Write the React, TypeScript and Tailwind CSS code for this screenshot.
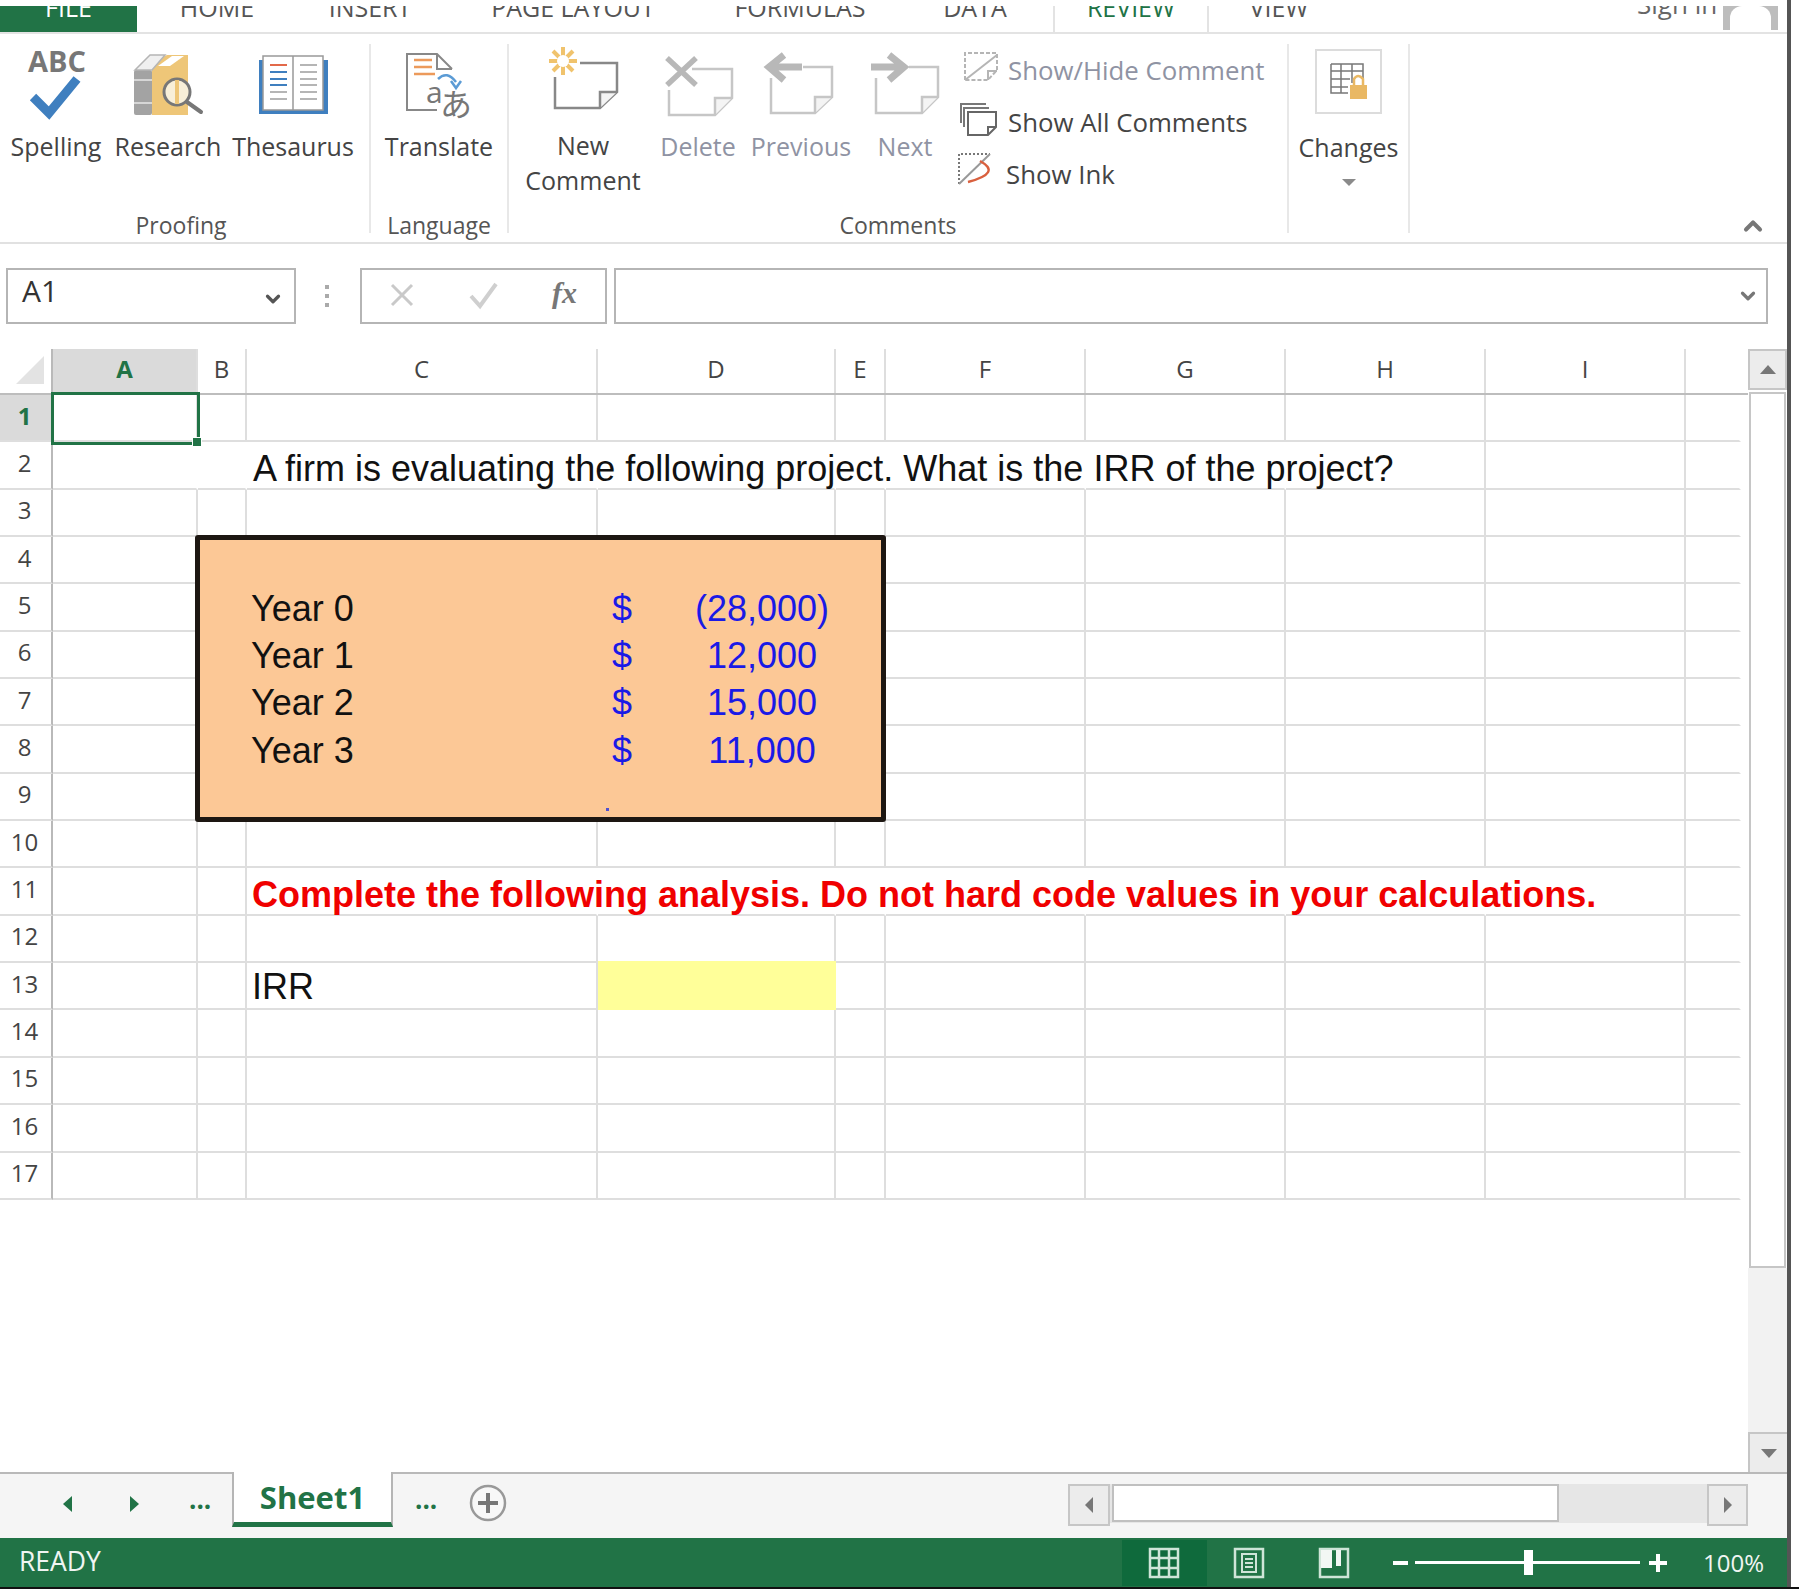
import type { ReactNode } from 'react';
import { ChevronDown, ChevronUp } from 'lucide-react';

const UI = "font-['Open_Sans','Noto_Sans',sans-serif]";
const CELL = "font-['Liberation_Sans',Arial,sans-serif]";

const COLS = [
  { label: 'A', w: 145 },
  { label: 'B', w: 49 },
  { label: 'C', w: 351 },
  { label: 'D', w: 238 },
  { label: 'E', w: 50 },
  { label: 'F', w: 200 },
  { label: 'G', w: 200 },
  { label: 'H', w: 200 },
  { label: 'I', w: 200 },
  { label: '', w: 55 },
];

const TABS = [
  { label: 'HOME', w: 160 },
  { label: 'INSERT', w: 146 },
  { label: 'PAGE LAYOUT', w: 260 },
  { label: 'FORMULAS', w: 194 },
  { label: 'DATA', w: 156 },
  { label: 'REVIEW', w: 156, active: true },
  { label: 'VIEW', w: 140 },
];

const FLOWS = [
  { year: 'Year 0', amount: '(28,000)' },
  { year: 'Year 1', amount: '12,000' },
  { year: 'Year 2', amount: '15,000' },
  { year: 'Year 3', amount: '11,000' },
];

const ROWS = Array.from({ length: 17 }, (_, i) => i + 1);

const Note = ({ d, fold, color }: { d: string; fold: string; color: string }) => (
  <g fill="none" stroke={color} strokeWidth="2.5">
    <path d={d} />
    <path d={fold} fill="#f4f4f4" />
  </g>
);

const BigButton = ({ w, label, muted, children, lh }: { w: number; label: string[]; muted?: boolean; children: ReactNode; lh?: number }) => (
  <div className="flex flex-col items-center shrink-0" style={{ width: w }}>
    <div className="h-[84px]">{children}</div>
    {label.map(l => (
      <div key={l} className={`text-[25px] h-[36px] leading-[36px] whitespace-nowrap ${muted ? 'text-[#8f93a3]' : 'text-[#444]'}`} style={lh ? { marginTop: lh } : undefined}>
        {l}
      </div>
    ))}
  </div>
);

const Group = ({ w, title, pr, children }: { w: number; title: string; pr?: number; children: ReactNode }) => (
  <div className="flex flex-col h-[189px] border-r-2 border-[#e8e8e8] shrink-0" style={{ width: w }}>
    <div className="flex flex-1">{children}</div>
    <div className="h-[16px] leading-[16px] text-center text-[23px] text-[#555]" style={pr ? { paddingRight: pr } : undefined}>{title}</div>
  </div>
);

const SmallButton = ({ label, muted, pl, h, children }: { label: string; muted?: boolean; pl: number; h: number; children: ReactNode }) => (
  <div className="flex items-center" style={{ height: h }}>
    <div style={{ width: pl }}>{children}</div>
    <span className={`text-[25.8px] whitespace-nowrap ${muted ? 'text-[#8f93a3]' : 'text-[#444]'}`}>{label}</span>
  </div>
);

const Ribbon = () => (
  <div className={`${UI} flex h-[210px] pt-[10px] border-b-2 border-[#e1e1e1]`}>
    <Group w={371} title="Proofing" pr={7}>
      <BigButton w={112} label={['Spelling']}>
        <svg width="112" height="86" viewBox="0 44 112 86">
          <text x="57" y="72" textAnchor="middle" fontSize="29" fontWeight="700" fill="#777" fontFamily="Open Sans">ABC</text>
          <path d="M33 97 L49 113 L77 79" fill="none" stroke="#3f7fbf" strokeWidth="9" />
        </svg>
      </BigButton>
      <BigButton w={112} label={['Research']}>
        <svg width="112" height="86" viewBox="112 44 112 86">
          <path d="M152 62 L167 55 L188 55 L188 115 L152 115 Z" fill="#eec678" />
          <path d="M158 66 L172 56 L184 56 L170 66 Z" fill="#fff" />
          <rect x="134" y="70" width="18" height="45" rx="2" fill="#a3a3a3" />
          <path d="M135 70 L150 55 L165 55 L152 70 Z" fill="#f0f0f0" stroke="#b5b5b5" strokeWidth="1.5" />
          <path d="M134 80 H152 M134 103 H152" stroke="#e8e8e8" strokeWidth="1.5" />
          <circle cx="177" cy="92" r="13" fill="#f8efd8" stroke="#777" strokeWidth="3" />
          <path d="M177 80 V104" stroke="#eec678" strokeWidth="4" />
          <path d="M187 102 L201 112" stroke="#777" strokeWidth="4" strokeLinecap="round" />
        </svg>
      </BigButton>
      <BigButton w={138} label={['Thesaurus']}>
        <svg width="138" height="86" viewBox="224 44 138 86">
          <path d="M259 60 H328 V114 H259 Z" fill="#3f7fbf" />
          <path d="M263 56 H293 V110 H263 Z M293 56 H323 V110 H293 Z" fill="#fff" stroke="#999" strokeWidth="1.5" />
          <path d="M270 65 H287" stroke="#e2694a" strokeWidth="2" />
          <path d="M270 72 H287 M270 79 H287 M270 85 H287" stroke="#3f7fbf" strokeWidth="2" />
          <path d="M270 92 H287 M270 99 H287 M300 65 H317 M300 72 H317 M300 79 H317 M300 85 H317 M300 92 H317 M300 99 H317" stroke="#b5b5b5" strokeWidth="2" />
        </svg>
      </BigButton>
    </Group>
    <Group w={138} title="Language">
      <BigButton w={136} label={['Translate']}>
        <svg width="136" height="86" viewBox="371 44 136 86">
          <path d="M437 110 H407 V54 H437 L452 69 M437 54 V69 H452" fill="none" stroke="#888" strokeWidth="2" />
          <path d="M414 60 H432 M414 67 H432 M414 74 H435" stroke="#ec9a5b" strokeWidth="2.5" />
          <path d="M438 79 Q447 70 456 82" fill="none" stroke="#5b9bd5" strokeWidth="2.5" />
          <path d="M451 81 L456 88 L461 81" fill="none" stroke="#5b9bd5" strokeWidth="2.5" />
          <text x="426" y="103" fontSize="30" fill="#777" fontFamily="Open Sans">a</text>
          <text x="440" y="116" fontSize="32" fill="#777" fontFamily="Noto Sans CJK JP">あ</text>
        </svg>
      </BigButton>
    </Group>
    <Group w={780} title="Comments">
      <BigButton w={148} label={['New', 'Comment']} lh={-1}>
        <svg width="148" height="86" viewBox="509 44 148 86">
          <path d="M563 47 V75 M549 61 H577 M553 51 L573 71 M573 51 L553 71" stroke="#f0c36d" strokeWidth="4" />
          <circle cx="563" cy="61" r="6" fill="#fff" />
          <Note color="#888" d="M580 63 H617 V92 L600 108 H555 V77" fold="M600 108 V92 H617" />
        </svg>
      </BigButton>
      <BigButton w={82} label={['Delete']} muted>
        <svg width="82" height="86" viewBox="657 44 82 86">
          <Note color="#c6c6c6" d="M692 69 H732 V98 L715 115 H669 V90" fold="M715 115 V98 H732" />
          <path d="M667 58 L696 85 M696 58 L667 85" stroke="#b8b8b8" strokeWidth="5.5" />
        </svg>
      </BigButton>
      <BigButton w={124} label={['Previous']} muted>
        <svg width="124" height="86" viewBox="739 44 124 86">
          <Note color="#c6c6c6" d="M803 67 H832 V97 L815 113 H771 V78" fold="M815 113 V97 H832" />
          <path d="M802 67 H770 M784 55 L769 67 L784 80" fill="none" stroke="#b8b8b8" strokeWidth="7" />
        </svg>
      </BigButton>
      <BigButton w={84} label={['Next']} muted>
        <svg width="84" height="86" viewBox="863 44 84 86">
          <Note color="#c6c6c6" d="M909 67 H938 V97 L922 113 H876 V78" fold="M922 113 V97 H938" />
          <path d="M871 67 H903 M889 55 L904 67 L889 80" fill="none" stroke="#b8b8b8" strokeWidth="7" />
        </svg>
      </BigButton>
      <div className="flex flex-col ml-[8px]">
        <SmallButton label="Show/Hide Comment" muted pl={53} h={53}>
          <svg width="48" height="52" viewBox="955 45 48 52">
            <path d="M965 80 V53 H997 V70 L988 80 Z" fill="none" stroke="#b5b5b5" strokeWidth="2" strokeDasharray="4 2" />
            <path d="M965 80 L997 55 M988 80 V71 H997" fill="none" stroke="#b5b5b5" strokeWidth="2" />
          </svg>
        </SmallButton>
        <SmallButton label="Show All Comments" pl={53} h={51}>
          <svg width="48" height="52" viewBox="955 97 48 52">
            <path d="M961 123 V104 H986 M964 127 V108 H989" fill="none" stroke="#777" strokeWidth="2" />
            <path d="M968 112 H996 V127 L988 135 H968 Z M988 135 V127 H996" fill="#fff" stroke="#666" strokeWidth="2" />
          </svg>
        </SmallButton>
        <SmallButton label="Show Ink" pl={51} h={52}>
          <svg width="48" height="52" viewBox="955 149 48 52">
            <path d="M959 185 V155 H990" fill="none" stroke="#777" strokeWidth="2" strokeDasharray="2 2" />
            <path d="M959 185 L990 155" stroke="#999" strokeWidth="2" />
            <path d="M980 162 Q1002 174 968 183" fill="none" stroke="#d9603e" strokeWidth="2.5" />
          </svg>
        </SmallButton>
      </div>
    </Group>
    <Group w={121} title="">
      <div className="flex flex-col items-center w-full pt-[5px]">
        <div className="w-[67px] h-[65px] border-2 border-[#dcdcdc] flex items-center justify-center shrink-0">
          <svg width="46" height="46" viewBox="1328 60 46 46">
            <path d="M1333 65 H1365 V84 M1333 65 V94 H1350 M1333 72 H1365 M1333 80 H1352 M1333 88 H1350 M1343 65 V94 M1354 65 V84" fill="none" stroke="#777" strokeWidth="1.5" />
            <path d="M1356 86 V80 Q1360 74 1365 80 V86" fill="none" stroke="#e9b864" strokeWidth="2.5" />
            <rect x="1352" y="86" width="17" height="14" fill="#e9b864" />
          </svg>
        </div>
        <div className="mt-[15px] text-[25px] leading-[36px] text-[#444]">Changes</div>
        <div className="mt-[14px] w-0 h-0 border-x-[7px] border-x-transparent border-t-[7px] border-t-[#8a8a8a]" />
      </div>
    </Group>
    <div className="flex-1 flex justify-end items-end pr-[20px]">
      <ChevronUp className="w-[28px] h-[28px] text-[#777] mb-[2px]" strokeWidth={3.5} />
    </div>
  </div>
);

const FormulaBar = () => (
  <div className={`${UI} flex items-stretch h-[56px] mt-[24px] pl-[6px] pr-[19px]`}>
    <div className="w-[290px] border-2 border-[#b5b5b5] flex items-center justify-between pl-[14px] pr-[10px]">
      <span className="text-[30px] leading-none text-[#333] -mt-[10px]">A1</span>
      <ChevronDown className="w-[22px] h-[22px] text-[#555] mt-[6px]" strokeWidth={3.5} />
    </div>
    <div className="w-[64px] flex flex-col items-center justify-center gap-[5px] pr-[3px]">
      <span className="w-[4px] h-[4px] bg-[#aaa]" />
      <span className="w-[4px] h-[4px] bg-[#aaa]" />
      <span className="w-[4px] h-[4px] bg-[#aaa]" />
    </div>
    <div className="w-[247px] border-2 border-[#b5b5b5] relative flex items-center">
      <svg width="243" height="52" viewBox="361 270 243 52">
        <path d="M391 285 L411 305 M411 285 L391 305" stroke="#c9c9c9" strokeWidth="3" />
        <path d="M470 296 L479 306 L495 284" fill="none" stroke="#cfcfcf" strokeWidth="4" />
        <text x="551" y="303" fontSize="30" fontStyle="italic" fontWeight="700" fill="#777" fontFamily="Liberation Serif">fx</text>
      </svg>
    </div>
    <div className="flex-1 ml-[7px] border-2 border-[#b5b5b5] flex items-center justify-end pr-[7px]">
      <ChevronDown className="w-[22px] h-[22px] text-[#777]" strokeWidth={3.5} />
    </div>
  </div>
);

const Cell = ({ row, col }: { row: number; col: number }) => {
  // text spills over from column C in rows 2 and 11, so no inner lines there
  const spill = (row === 2 && col < 7) || (row === 11 && col >= 2 && col < 8);
  const yellow = row === 13 && col === 3;
  const edge = col < 9 && !spill ? 'border-r-[#dedede]' : 'border-r-transparent';
  return (
    <div
      className={`shrink-0 border-b-2 border-r-2 ${yellow ? 'bg-[#ffff99] border-[#ffff99] shadow-[0_-2px_0_#ffff99]' : `border-b-[#dedede] ${edge}`}`}
      style={{ width: COLS[col].w }}
    />
  );
};

const Sheet = () => (
  <div className="relative w-[1748px] h-[850px]">
    {/* column headers */}
    <div className={`${UI} flex h-[46px] border-b-2 border-[#bdbdbd]`}>
      <div className="w-[53px] shrink-0 border-r-2 border-[#b9b9b9] relative">
        <div className="absolute right-[7px] bottom-[9px] w-0 h-0 border-l-[28px] border-l-transparent border-b-[28px] border-b-[#e3e3e3]" />
      </div>
      {COLS.map((c, i) => (
        <div
          key={i}
          className={`shrink-0 flex items-center justify-center text-[24px] pb-[4px] ${i < 9 ? 'border-r-2 border-[#dedede]' : ''} ${i === 0 ? 'bg-[#dadada] text-[#217346] font-bold' : 'text-[#444]'}`}
          style={{ width: c.w }}
        >
          {c.label}
        </div>
      ))}
    </div>
    {/* rows */}
    {ROWS.map(r => (
      <div key={r} className="flex h-[47.35px]">
        <div className={`${UI} w-[53px] shrink-0 border-r-2 border-b-2 border-r-[#b9b9b9] border-b-[#dedede] flex items-center justify-center text-[24px] pr-[2px] pb-[4px] ${r === 1 ? 'bg-[#dadada] text-[#217346] font-bold' : 'text-[#444]'}`}>
          {r}
        </div>
        {COLS.map((_, i) => <Cell key={i} row={r} col={i} />)}
      </div>
    ))}

    {/* overflowing cell text */}
    <div className={`${CELL} absolute left-[253px] top-[96px] h-[47px] leading-[47px] text-[36px] text-[#111] whitespace-nowrap`}>
      A firm is evaluating the following project. What is the IRR of the project?
    </div>
    <div className={`${CELL} absolute left-[252px] top-[522px] h-[47px] leading-[47px] text-[36px] font-bold text-[#f00000] whitespace-nowrap`}>
      Complete the following analysis. Do not hard code values in your calculations.
    </div>
    <div className={`${CELL} absolute left-[252px] top-[614px] h-[47px] leading-[47px] text-[36px] text-[#111]`}>IRR</div>

    {/* text box over the grid */}
    <div className={`${CELL} absolute left-[195px] top-[186px] w-[691px] h-[287px] bg-[#fcc896] border-[5px] border-[#1d1712] rounded-[3px] pl-[51px] pt-[45px] text-[36px]`}>
      {FLOWS.map(f => (
        <div key={f.year} className="flex h-[47.35px] items-center text-[#111]">
          <span className="w-[361px]">{f.year}</span>
          <span className="w-[70px] text-[#1a1ae6]">$</span>
          <span className="w-[160px] text-center text-[#1a1ae6]">{f.amount}</span>
        </div>
      ))}
      <div className="absolute left-[406px] top-[268px] w-[3px] h-[3px] bg-[#5050d0]" />
    </div>

    {/* selected cell */}
    <div className="absolute left-[51px] top-[43px] w-[149px] h-[53px] border-[3px] border-[#217346]">
      <div className="absolute -right-[5px] -bottom-[5px] w-[10px] h-[10px] bg-[#217346] border border-white" />
    </div>
  </div>
);

const VScroll = () => (
  <div className="w-[39px] h-[1123px] flex flex-col">
    <div className="h-[41px] bg-[#ececec] border-2 border-[#c6c6c6] flex items-center justify-center shrink-0">
      <div className="w-0 h-0 border-x-[8px] border-x-transparent border-b-[9px] border-b-[#777]" />
    </div>
    <div className="h-[876px] mt-[2px] border-2 border-[#c6c6c6] mx-[1px] shrink-0" />
    <div className="flex-1 bg-[#f2f2f2]" />
    <div className="h-[40px] bg-[#ececec] border-l-2 border-t-2 border-[#c6c6c6] flex items-center justify-center shrink-0">
      <div className="w-0 h-0 border-x-[8px] border-x-transparent border-t-[9px] border-t-[#777]" />
    </div>
  </div>
);

const TabBar = () => (
  <div className={`${UI} relative h-[66px] border-t-2 border-[#b9b9b9] bg-[#f5f5f5] flex items-start`}>
    <div className="ml-[63px] mt-[22px] w-0 h-0 border-y-[8px] border-y-transparent border-r-[9px] border-r-[#217346]" />
    <div className="ml-[58px] mt-[22px] w-0 h-0 border-y-[8px] border-y-transparent border-l-[9px] border-l-[#217346]" />
    <div className="ml-[50px] w-[21px] mt-[10px] text-[26px] font-bold text-[#217346] leading-[30px]">...</div>
    <div className="ml-[22px] w-[161px] h-[55px] -mt-[2px] bg-white border-x-2 border-[#b5b5b5] border-b-[5px] border-b-[#217346] text-center text-[31px] font-bold text-[#217346] leading-[50px]">
      Sheet1
    </div>
    <div className="ml-[22px] w-[21px] mt-[10px] text-[26px] font-bold text-[#217346] leading-[30px]">...</div>
    <svg className="ml-[33px] mt-[10px]" width="38" height="38" viewBox="0 0 38 38">
      <circle cx="19" cy="19" r="17" fill="#f8f8f8" stroke="#999" strokeWidth="2.5" />
      <path d="M19 9 V29 M9 19 H29" stroke="#777" strokeWidth="4" />
    </svg>
    {/* horizontal scrollbar */}
    <div className="ml-auto mr-[39px] mt-[10px] flex h-[42px]">
      <div className="w-[42px] bg-[#ececec] border-2 border-[#c6c6c6] flex items-center justify-center">
        <div className="w-0 h-0 border-y-[8px] border-y-transparent border-r-[8px] border-r-[#777]" />
      </div>
      <div className="w-[597px] h-[39px] bg-[#e6e6e6] flex">
        <div className="w-[447px] ml-[2px] h-[38px] bg-white border-2 border-[#c0c0c0]" />
      </div>
      <div className="w-[41px] bg-[#ececec] border-2 border-[#c6c6c6] flex items-center justify-center">
        <div className="w-0 h-0 border-y-[8px] border-y-transparent border-l-[8px] border-l-[#777]" />
      </div>
    </div>
  </div>
);

const StatusBar = () => (
  <div className={`${UI} h-[49px] bg-[#217346] flex items-center text-white relative`}>
    <span className="ml-[19px] text-[26.5px] -mt-[2px] text-[#f0f5f2]">READY</span>
    <div className="ml-auto flex items-center h-full mr-[23px]">
      <div className="w-[85px] h-[46px] bg-[#0f6a3c] flex items-center justify-center">
        <svg width="32" height="32" viewBox="0 0 32 32" fill="none" stroke="#cfe5d8" strokeWidth="2.5">
          <path d="M2 2 H30 V30 H2 Z M2 11 H30 M2 21 H30 M11 2 V30 M21 2 V30" />
        </svg>
      </div>
      <div className="w-[85px] flex justify-center">
        <svg width="32" height="32" viewBox="0 0 32 32" fill="none" stroke="#cfe5d8" strokeWidth="2.5">
          <path d="M2 2 H30 V30 H2 Z" />
          <path d="M9 7 H23 V25 H9 Z M12 12 H20 M12 16 H20 M12 20 H20" strokeWidth="2" />
        </svg>
      </div>
      <div className="w-[85px] flex justify-center">
        <svg width="32" height="32" viewBox="0 0 32 32" fill="none">
          <path d="M2 2 H30 V30 H2 Z" stroke="#cfe5d8" strokeWidth="2.5" />
          <path d="M3 3 H14 V21 H3 Z M18 3 H23 V19 H18 Z" fill="#f2f7f4" />
        </svg>
      </div>
      <div className="ml-[16px] w-[15px] h-[4px] bg-white" />
      <div className="relative ml-[7px] w-[225px] h-[3px] bg-white">
        <div className="absolute left-[109px] -top-[11px] w-[9px] h-[25px] bg-white" />
      </div>
      <div className="relative ml-[9px] w-[18px] h-[18px]">
        <div className="absolute left-0 top-[7px] w-[18px] h-[4px] bg-white" />
        <div className="absolute left-[7px] top-0 w-[4px] h-[18px] bg-white" />
      </div>
      <span className="ml-[36px] text-[24px] text-[#f0f5f2]">100%</span>
    </div>
  </div>
);

const TopTabs = () => (
  <div className={`${UI} h-[28px] mt-[6px] border-b-2 border-[#e3e3e3] flex items-end overflow-hidden relative`}>
    <div className="w-[137px] h-full bg-[#217346] text-white text-[25px] flex justify-center items-end shrink-0 overflow-hidden">
      <span className="pb-[12px] leading-none">FILE</span>
    </div>
    {TABS.map(t => (
      <div
        key={t.label}
        className={`h-full shrink-0 flex justify-center items-end overflow-hidden text-[25px] ${t.active ? 'text-[#217346] border-x-2 border-[#e3e3e3]' : 'text-[#555]'}`}
        style={{ width: t.w }}
      >
        <span className="pb-[12px] leading-none whitespace-nowrap">{t.label}</span>
      </div>
    ))}
    <div className="absolute left-[1637px] top-0 h-full overflow-hidden text-[26px] text-[#666]">
      <span className="block -mt-[17px] leading-[30px]">Sign in</span>
    </div>
    <div className="absolute left-[1723px] top-0 w-[55px] h-[24px] bg-[#bdbdbd]">
      <div className="absolute left-[7px] top-0 w-[41px] h-[24px] bg-white rounded-t-[12px]" />
    </div>
  </div>
);

export default function App() {
  return (
    <div className="relative w-[1799px] h-[1589px] bg-white overflow-hidden">
      <div className="w-[1791px] h-[1587px] border-r-4 border-[#555] flex flex-col">
        <TopTabs />
        <Ribbon />
        <FormulaBar />
        <div className="flex mt-[25px] h-[1123px]">
          <Sheet />
          <VScroll />
        </div>
        <TabBar />
        <StatusBar />
      </div>
      <div className="h-[2px] bg-[#111]" />
    </div>
  );
}
